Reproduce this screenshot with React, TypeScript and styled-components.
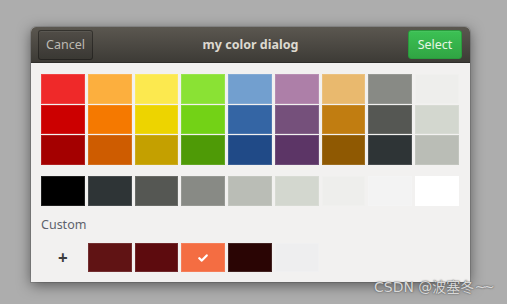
import React from "react";
import styled, { createGlobalStyle } from "styled-components";

const GlobalStyle = createGlobalStyle`
  html, body {
    margin: 0;
    padding: 0;
    background: #adadad;
  }
  body {
    font-family: "Noto Sans", "Open Sans", "DejaVu Sans", sans-serif;
  }
`;

const Page = styled.div`
  position: relative;
  width: 507px;
  height: 304px;
  box-sizing: border-box;
  padding: 27px 0 0 31px;
  overflow: hidden;
  background: #adadad;
`;

const Dialog = styled.div`
  width: 439px;
  background: #f2f1f0;
  border-radius: 5px 5px 0 0;
  box-shadow: 0 3px 14px rgba(0, 0, 0, 0.5), 0 0 0 1px rgba(0, 0, 0, 0.12);
  overflow: hidden;
`;

const HeaderBar = styled.div`
  height: 36px;
  box-sizing: border-box;
  display: grid;
  grid-template-columns: auto 1fr auto;
  align-items: center;
  padding: 0 8px 0 7px;
  background: linear-gradient(#5b5750, #3d3b36);
  border-bottom: 1px solid #2f2e2b;
`;

const HeaderButton = styled.div<{ $suggested?: boolean }>`
  height: ${(p) => (p.$suggested ? 29 : 30)}px;
  width: ${(p) => (p.$suggested ? 54 : 55)}px;
  box-sizing: border-box;
  display: flex;
  align-items: center;
  justify-content: center;
  border-radius: 3px;
  font-size: 12.5px;
  color: ${(p) => (p.$suggested ? "#e6f6e4" : "#bdbab3")};
  background: ${(p) =>
    p.$suggested ? "linear-gradient(#3cc154, #30a543)" : "rgba(0, 0, 0, 0.08)"};
  border: 1px solid
    ${(p) => (p.$suggested ? "#2a9a3c" : "rgba(0, 0, 0, 0.35)")};
  box-shadow: inset 0 1px 0 rgba(255, 255, 255, 0.06);
`;

const Title = styled.div`
  text-align: center;
  font-weight: 700;
  font-size: 12.5px;
  color: #ddd9d0;
`;

const Body = styled.div`
  padding: 11px 11px 10px 10px;
`;

const SwatchGrid = styled.div<{ $top?: number }>`
  display: grid;
  grid-template-columns: repeat(9, 1fr);
  column-gap: 3px;
  row-gap: 1px;
  margin-top: ${(p) => p.$top ?? 0}px;
`;

const Swatch = styled.div<{ $color: string }>`
  height: 29.7px;
  background: ${(p) => p.$color};
  box-shadow: inset 0 0 0 1px rgba(255, 255, 255, 0.12);
  display: flex;
  align-items: center;
  justify-content: center;
`;

const AddCell = styled.div`
  height: 29px;
  display: flex;
  align-items: center;
  justify-content: center;
  color: #3c3c3c;
  font-size: 17px;
  font-weight: 700;
`;

const SectionLabel = styled.div`
  margin-top: 10px;
  height: 18px;
  line-height: 18px;
  font-size: 12.5px;
  color: #5d626c;
`;

const Watermark = styled.div`
  position: absolute;
  left: 374px;
  top: 276px;
  font-family: "DejaVu Sans", "Noto Sans CJK SC", sans-serif;
  font-size: 14px;
  color: rgba(240, 240, 240, 0.85);
  text-shadow: 0 0 1px #555, 0 0 2px #666;
  white-space: nowrap;
`;

const Tildes = styled.span`
  letter-spacing: -3px;
`;

const palette = [
  ["#ef2929", "#fcaf3e", "#fce94f", "#8ae234", "#729fcf", "#ad7fa8", "#e9b96e", "#888a85", "#eeeeec"],
  ["#cc0000", "#f57900", "#edd400", "#73d216", "#3465a4", "#75507b", "#c17d11", "#555753", "#d3d7cf"],
  ["#a40000", "#ce5c00", "#c4a000", "#4e9a06", "#204a87", "#5c3566", "#8f5902", "#2e3436", "#babdb6"],
];

const grays = ["#000000", "#2e3436", "#555753", "#888a85", "#babdb6", "#d3d7cf", "#eeeeec", "#f3f3f3", "#ffffff"];

const custom = [
  { c: "#601314", sel: false },
  { c: "#5d0b0e", sel: false },
  { c: "#f46d42", sel: true },
  { c: "#2a0504", sel: false },
  { c: "#eeeeef", sel: false },
];

const Check = () => (
  <svg width="10" height="8" viewBox="0 0 10 8">
    <path d="M1.3 4.2 L3.8 6.6 L8.7 1.4" fill="none" stroke="#fff" strokeWidth="2.2" strokeLinecap="round" strokeLinejoin="round" />
  </svg>
);

export default function App() {
  return (
    <>
      <GlobalStyle />
      <Page>
        <Dialog>
          <HeaderBar>
            <HeaderButton>Cancel</HeaderButton>
            <Title>my color dialog</Title>
            <HeaderButton $suggested>Select</HeaderButton>
          </HeaderBar>
          <Body>
            <SwatchGrid>
              {palette.flat().map((c, i) => (
                <Swatch key={i} $color={c} />
              ))}
            </SwatchGrid>
            <SwatchGrid $top={11}>
              {grays.map((c, i) => (
                <Swatch key={i} $color={c} />
              ))}
            </SwatchGrid>
            <SectionLabel>Custom</SectionLabel>
            <SwatchGrid $top={9}>
              <AddCell>+</AddCell>
              {custom.map((s, i) => (
                <Swatch key={i} $color={s.c}>
                  {s.sel && <Check />}
                </Swatch>
              ))}
            </SwatchGrid>
          </Body>
        </Dialog>
        <Watermark>
          CSDN @波塞冬<Tildes>~~</Tildes>
        </Watermark>
      </Page>
    </>
  );
}
